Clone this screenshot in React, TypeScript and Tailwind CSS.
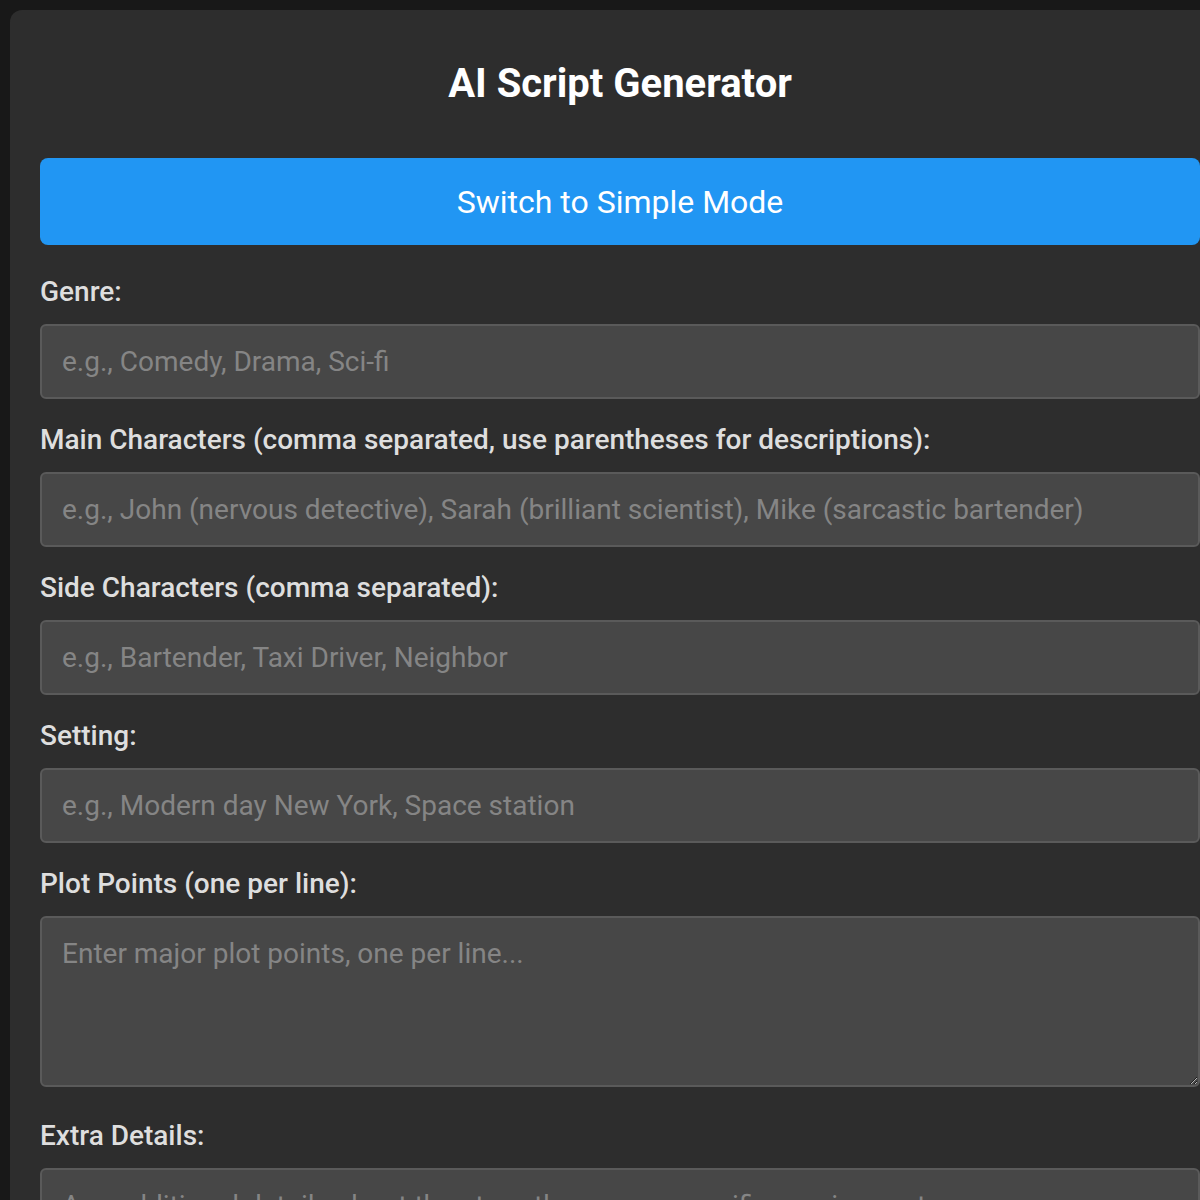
import React from "react";

const fields = [
  { label: "Genre:", placeholder: "e.g., Comedy, Drama, Sci-fi" },
  {
    label: "Main Characters (comma separated, use parentheses for descriptions):",
    placeholder: "e.g., John (nervous detective), Sarah (brilliant scientist), Mike (sarcastic bartender)",
  },
  { label: "Side Characters (comma separated):", placeholder: "e.g., Bartender, Taxi Driver, Neighbor" },
  { label: "Setting:", placeholder: "e.g., Modern day New York, Space station" },
];

const labelCls = "block mb-[16px] text-[28px] leading-[32px] font-medium text-[#dedede]";
const inputCls =
  "block w-full h-[75px] rounded-[6px] border-2 border-[#5a5a5a] bg-[#474747] px-[20px] text-[28px] text-[#e0e0e0] placeholder:text-[#858585] outline-none";
const areaCls =
  "block w-full h-[171px] rounded-[6px] border-2 border-[#5a5a5a] bg-[#474747] px-[20px] py-[18px] text-[28px] leading-[36px] text-[#e0e0e0] placeholder:text-[#858585] outline-none";

export default function App() {
  return (
    <div className="min-h-screen bg-[#181818] pt-[10px] pl-[10px] overflow-hidden font-['Roboto',sans-serif]">
      <div className="w-[1220px] rounded-[12px] bg-[#2d2d2d] px-[30px] pt-[50px] pb-[40px]">
        <h1 className="text-center text-[40px] leading-[48px] font-bold text-white">AI Script Generator</h1>

        <button className="mt-[50px] w-full h-[87px] rounded-[8px] bg-[#2196f3] text-[32px] text-white">
          Switch to Simple Mode
        </button>

        <div className="mt-[31px] flex flex-col">
          {fields.map((f) => (
            <div key={f.label} className="mb-[25px]">
              <label className={labelCls}>{f.label}</label>
              <input className={inputCls} placeholder={f.placeholder} />
            </div>
          ))}

          <div className="mb-[33px]">
            <label className={labelCls}>Plot Points (one per line):</label>
            <textarea className={areaCls} placeholder="Enter major plot points, one per line..." />
          </div>

          <div>
            <label className={labelCls}>Extra Details:</label>
            <textarea
              className={areaCls}
              placeholder="Any additional details about the story, themes, or specific requirements..."
            />
          </div>
        </div>
      </div>
    </div>
  );
}
